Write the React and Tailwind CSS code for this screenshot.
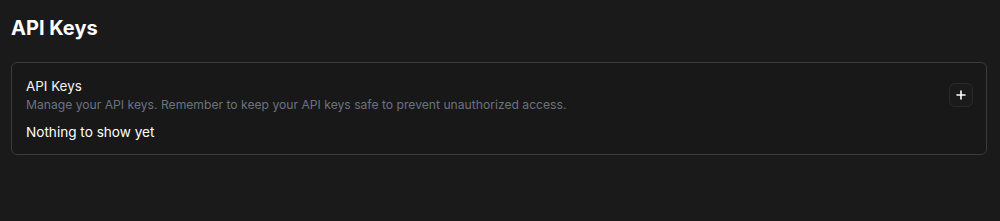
import React from "react";

export default function App() {
  return (
    <div className="min-h-[221px] w-full bg-[#1a1a1a] px-[11px] pt-[14px]" style={{ fontFamily: "Inter, 'Noto Sans', sans-serif" }}>
      <h1 className="text-[20px] font-bold leading-[28px] text-white">API Keys</h1>
      <div className="mt-[20px] flex w-[976px] items-start justify-between rounded-md border border-[#3b3b3b] bg-[#181818] pt-[14px] pb-[12px] pl-[14px] pr-[13px]">
        <div className="flex flex-col">
          <div className="text-[13.4px] leading-[18px] text-[#f4f4f5]">API Keys</div>
          <div className="mt-[1px] text-[12.15px] leading-[17px] text-[#6b7280]">
            Manage your API keys. Remember to keep your API keys safe to prevent unauthorized access.
          </div>
          <div className="mt-[9px] text-[13.6px] leading-[20px] text-white">Nothing to show yet</div>
        </div>
        <button className="mt-[6px] flex h-[24px] w-[24px] items-center justify-center rounded-md border border-[#2a2a2a] bg-[#1a1a1a] text-white">
          <svg width="10" height="10" viewBox="0 0 10 10" fill="none" stroke="currentColor" strokeWidth="1.6" strokeLinecap="round">
            <path d="M5 1v8M1 5h8" />
          </svg>
        </button>
      </div>
    </div>
  );
}
